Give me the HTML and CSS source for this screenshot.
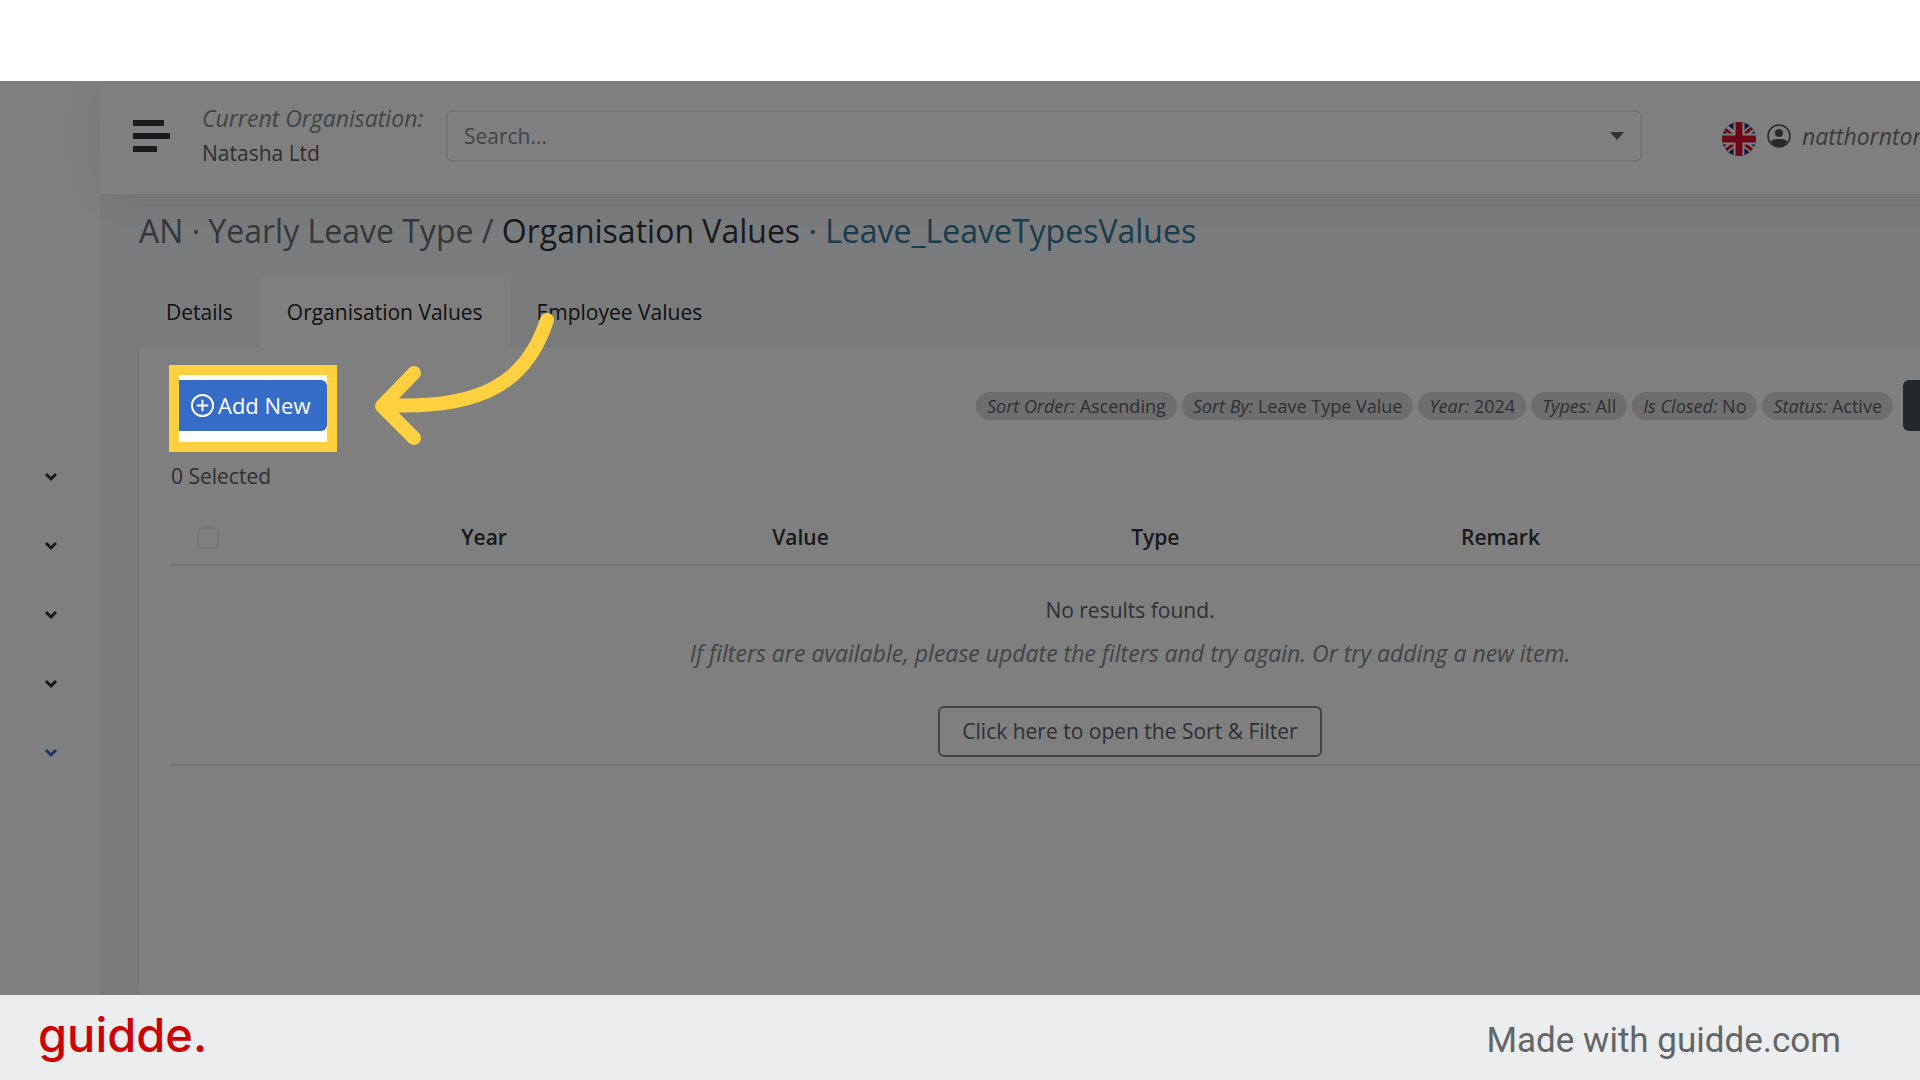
FILE: index.html
```html
<!DOCTYPE html>
<html lang="en">
<head>
  <meta charset="UTF-8" />
  <meta name="viewport" content="width=device-width, initial-scale=1.0"/>
  <title>Organisation Values</title>
  <link rel="stylesheet" href="styles.css">
</head>
<body>
  <div class="top-space"></div>

  <div class="stage">
    <div class="app">
      <nav class="sidebar" aria-label="Menu">
        <button type="button" class="menu-toggle" aria-label="Expand section 1"><svg viewBox="0 0 14 10"><path d="M2 2l5 5 5-5"/></svg></button>
        <button type="button" class="menu-toggle" aria-label="Expand section 2"><svg viewBox="0 0 14 10"><path d="M2 2l5 5 5-5"/></svg></button>
        <button type="button" class="menu-toggle" aria-label="Expand section 3"><svg viewBox="0 0 14 10"><path d="M2 2l5 5 5-5"/></svg></button>
        <button type="button" class="menu-toggle" aria-label="Expand section 4"><svg viewBox="0 0 14 10"><path d="M2 2l5 5 5-5"/></svg></button>
        <button type="button" class="menu-toggle active" aria-label="Expand section 5"><svg viewBox="0 0 14 10"><path d="M2 2l5 5 5-5"/></svg></button>
      </nav>

      <div class="main">
        <header class="header">
          <button type="button" class="hamburger" aria-label="Toggle menu">
            <svg viewBox="0 0 40 34"><path d="M1 4h31M1 17h37M1 30h24"/></svg>
          </button>
          <div class="organisation">
            <em>Current Organisation:</em>
            <span>Natasha Ltd</span>
          </div>
          <div class="search">
            <select class="search-select" aria-label="Search">
              <option>Search...</option>
            </select>
            <svg class="search-caret" viewBox="0 0 14 8"><path d="M0 0h14L7 8z"/></svg>
          </div>
          <div class="user">
            <svg class="flag" viewBox="0 0 34 34" role="img" aria-label="English">
              <clipPath id="round"><circle cx="17" cy="17" r="17"/></clipPath>
              <g clip-path="url(#round)">
                <path fill="#0a2f8f" d="M0 0h34v34H0z"/>
                <path stroke="#fff" stroke-width="7" d="M0 3l34 28M34 3L0 31"/>
                <path stroke="#d8102c" stroke-width="3" d="M0 5l13 10M34 3L21 13M0 31l13-10M34 31L21 21"/>
                <path stroke="#fff" stroke-width="11" d="M17 0v34M0 17h34"/>
                <path stroke="#d8102c" stroke-width="7" d="M17 0v34M0 17h34"/>
              </g>
            </svg>
            <svg class="user-icon" viewBox="0 0 24 24">
              <circle cx="12" cy="12" r="11" fill="none" stroke="#555" stroke-width="1.5"/>
              <circle cx="12" cy="9" r="4" fill="#555"/>
              <path fill="#555" d="M4 18c1-3 4-3 8-3s7 0 8 3c-2 3-5 5-8 5s-6-2-8-5z"/>
            </svg>
            <em class="user-name">natthornton</em>
          </div>
        </header>

        <div class="content">
          <h1 class="title">AN · Yearly Leave Type / <span class="title-page">Organisation Values</span> <a href="#">· Leave_LeaveTypesValues</a></h1>

          <div class="tabs">
            <a href="#" class="tab">Details</a>
            <a href="#" class="tab active">Organisation Values</a>
            <a href="#" class="tab">Employee Values</a>
          </div>

          <div class="card">
            <div class="toolbar">
              <div class="add-new">
                <button type="button" class="btn btn-primary">
                  <svg viewBox="0 0 24 24"><circle cx="12" cy="12" r="11"/><path d="M12 6v12M6 12h12"/></svg>
                  Add New
                </button>
                <div class="spotlight"></div>
                <svg class="arrow" viewBox="0 0 190 140">
                  <path d="M177 11C157 73 112 101 14 96M44 64L12 97M44 129L12 97"/>
                </svg>
              </div>
              <div class="filters">
                <span class="badge"><em>Sort Order:</em> Ascending</span>
                <span class="badge"><em>Sort By:</em> Leave Type Value</span>
                <span class="badge"><em>Year:</em> 2024</span>
                <span class="badge"><em>Types:</em> All</span>
                <span class="badge"><em>Is Closed:</em> No</span>
                <span class="badge"><em>Status:</em> Active</span>
                <button type="button" class="btn btn-dark" aria-label="Filters"></button>
              </div>
            </div>

            <p class="selected">0 Selected</p>

            <table class="results">
              <thead>
                <tr>
                  <th class="col-check"><input type="checkbox" aria-label="Select all"></th>
                  <th class="col-year">Year</th>
                  <th class="col-value">Value</th>
                  <th class="col-type">Type</th>
                  <th class="col-remark">Remark</th>
                  <th></th>
                </tr>
              </thead>
              <tbody>
                <tr>
                  <td colspan="6">
                    <p class="empty">No results found.</p>
                    <p class="empty-hint">If filters are available, please update the filters and try again. Or try adding a new item.</p>
                    <button type="button" class="btn btn-outline">Click here to open the Sort &amp; Filter</button>
                  </td>
                </tr>
              </tbody>
            </table>
          </div>
        </div>
      </div>
    </div>
  </div>

  <footer class="footer">
    <a href="#" class="logo">guidde.</a>
    <span class="made-with">Made with guidde.com</span>
  </footer>
</body>
</html>
```

FILE: styles.css
```css
* {
  margin: 0;
  padding: 0;
  box-sizing: border-box;
}

:root {
  --text: #5c6066;
  --dark: #30353a;
  --muted: #85888c;
  --blue: #346cc8;
  --link: #33789c;
  --page: #f5f7fa;
  --line: #ebecee;
  --yellow: #ffd140;
}

body {
  display: flex;
  flex-direction: column;
  min-height: 100vh;
  overflow-x: hidden;
  background-color: #fff;
  color: var(--text);
  font-family: "Open Sans", sans-serif;
  font-size: 21px;
  line-height: 35px;
}

button,
select {
  font: inherit;
  color: inherit;
}

button {
  border: none;
  background: none;
  cursor: pointer;
}

svg {
  display: block;
}

a {
  text-decoration: none;
}

.top-space {
  height: 81px;
}

.stage {
  flex: 1;
  display: flex;
  overflow: hidden;
}

/* The app is wider than the window and is cut off on the right */
.app {
  display: flex;
  flex: 0 0 112.5%;
}

/* Sidebar */
.sidebar {
  flex: 0 0 100px;
  padding: 361px 0 0 2px;
}

.menu-toggle {
  display: flex;
  align-items: center;
  justify-content: center;
  width: 100%;
  height: 69px;
}

.menu-toggle svg {
  width: 14px;
  height: 10px;
  fill: none;
  stroke: var(--dark);
  stroke-width: 3;
}

.menu-toggle.active svg {
  stroke: var(--blue);
}

/* Header */
.main {
  flex: 1;
  display: flex;
  flex-direction: column;
  background-color: var(--page);
}

.header {
  display: flex;
  align-items: center;
  height: 113px;
  padding: 0 40px 3px 32px;
  background-color: #fff;
  box-shadow: 0 0 48px rgba(0, 0, 0, 0.1);
}

.hamburger svg {
  width: 40px;
  height: 34px;
  fill: none;
  stroke: var(--dark);
  stroke-width: 6;
}

.organisation {
  display: flex;
  flex-direction: column;
  width: 244px;
  margin-left: 30px;
}

.organisation em {
  color: var(--muted);
  font-size: 23px;
}

.search {
  position: relative;
  flex: 1;
}

.search-select {
  display: block;
  width: 100%;
  height: 52px;
  padding: 0 16px;
  border: 2px solid var(--line);
  border-radius: 6px;
  background-color: #fff;
  color: var(--muted);
  appearance: none;
}

.search-caret {
  position: absolute;
  top: 22px;
  right: 18px;
  width: 14px;
  height: 8px;
  fill: #666;
}

.user {
  display: flex;
  align-items: center;
  width: 398px;
  margin-left: 80px;
}

.flag {
  width: 34px;
  height: 34px;
  margin-top: 6px;
}

.user-icon {
  width: 24px;
  height: 24px;
  margin: 0 11px;
}

.user-name {
  color: #777;
  font-size: 23px;
}

/* Content */
.content {
  flex: 1;
  display: flex;
  flex-direction: column;
  padding: 13px 39px 0;
}

.title {
  margin-bottom: 21px;
  color: #6c6e72;
  font-size: 32px;
  font-weight: 400;
  line-height: 48px;
}

.title-page {
  color: var(--dark);
}

.title a {
  color: var(--link);
}

/* Keeps the active tab above the shadow of the card */
.tabs {
  position: relative;
  display: flex;
}

.tab {
  padding: 19px 27px 17px;
  border-radius: 6px 6px 0 0;
  color: #222;
}

.tab.active {
  background-color: #fff;
}

.card {
  flex: 1;
  padding: 33px 32px 32px;
  background-color: #fff;
  box-shadow: 0 0 6px rgba(0, 0, 0, 0.06);
}

.toolbar {
  display: flex;
  align-items: center;
  justify-content: space-between;
}

.filters {
  display: flex;
  align-items: center;
  gap: 5px;
}

.btn {
  height: 51px;
  border-radius: 6px;
}

.btn-primary {
  display: flex;
  align-items: center;
  gap: 4px;
  padding: 0 16px 0 20px;
  background-color: var(--blue);
  color: #fff;
  font-size: 22px;
}

.btn-primary svg {
  width: 23px;
  height: 23px;
  fill: none;
  stroke: #fff;
  stroke-width: 2;
}

.btn-dark {
  width: 186px;
  margin-left: 5px;
  background-color: #495057;
}

.btn-outline {
  padding: 0 22px;
  border: 2px solid #888;
}

.badge {
  padding: 0 11px;
  border-radius: 14px;
  background-color: #dcdcdc;
  font-size: 18px;
  line-height: 28px;
  white-space: nowrap;
}

.selected {
  margin-top: 28px;
}

/* Table */
.results {
  width: 100%;
  margin-top: 17px;
  border-collapse: collapse;
  table-layout: fixed;
}

.results th {
  height: 54px;
  border-bottom: 2px solid var(--line);
  color: var(--dark);
  font-weight: 600;
}

.results td {
  padding: 27px 0 7px;
  border-bottom: 2px solid var(--line);
  text-align: center;
}

.results .col-check {
  width: 150px;
  padding-left: 26px;
  text-align: left;
}

.col-year {
  width: 17%;
}

.col-value {
  width: 16%;
}

.col-type {
  width: 21%;
}

.col-remark {
  width: 15%;
}

.col-check input {
  display: block;
  width: 22px;
  height: 22px;
  border: 2px solid var(--line);
  border-radius: 6px;
  appearance: none;
}

.empty {
  margin-bottom: 8px;
}

.empty-hint {
  margin-bottom: 35px;
  color: var(--muted);
  font-size: 23px;
  font-style: italic;
}

/* Highlight over the Add New button, dims everything around it */
.add-new {
  position: relative;
}

.spotlight {
  position: absolute;
  z-index: 2;
  top: -15px;
  right: -10px;
  bottom: -21px;
  left: -2px;
  border: 10px solid var(--yellow);
  box-shadow: 0 0 0 200vw rgba(0, 0, 0, 0.5);
  pointer-events: none;
}

.arrow {
  position: absolute;
  z-index: 3;
  top: -71px;
  left: calc(100% + 43px);
  width: 190px;
  height: 140px;
  fill: none;
  stroke: var(--yellow);
  stroke-width: 14;
  stroke-linecap: round;
  stroke-linejoin: round;
  pointer-events: none;
}

/* Footer */
.footer {
  display: flex;
  align-items: center;
  justify-content: space-between;
  height: 85px;
  padding: 0 79px 0 38px;
  background-color: #ecedef;
}

.logo {
  padding-bottom: 6px;
  color: #cc0000;
  font-family: Inter, sans-serif;
  font-size: 47px;
  font-weight: 500;
}

.made-with {
  padding-top: 6px;
  color: #636567;
  font-family: Roboto, sans-serif;
  font-size: 35px;
}
```
